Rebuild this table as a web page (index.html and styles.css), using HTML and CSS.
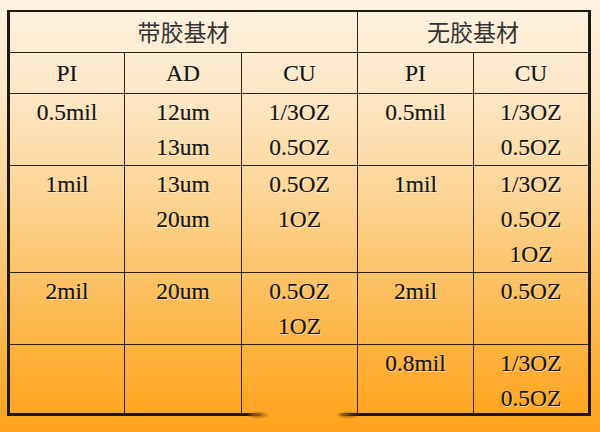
FILE: index.html
```html
<!DOCTYPE html>
<html>
<head>
<meta charset="utf-8">
<link rel="stylesheet" href="styles.css">
</head>
<body>
<div class="page">
  <div class="table">
    <div class="cell group span3">带胶基材</div>
    <div class="cell group span2 last-col">无胶基材</div>

    <div class="cell head">PI</div>
    <div class="cell head">AD</div>
    <div class="cell head">CU</div>
    <div class="cell head">PI</div>
    <div class="cell head last-col">CU</div>

    <div class="cell"><span>0.5mil</span></div>
    <div class="cell"><span>12um</span><span>13um</span></div>
    <div class="cell"><span>1/3OZ</span><span>0.5OZ</span></div>
    <div class="cell"><span>0.5mil</span></div>
    <div class="cell last-col"><span>1/3OZ</span><span>0.5OZ</span></div>

    <div class="cell"><span>1mil</span></div>
    <div class="cell"><span>13um</span><span>20um</span></div>
    <div class="cell"><span>0.5OZ</span><span>1OZ</span></div>
    <div class="cell"><span>1mil</span></div>
    <div class="cell last-col"><span>1/3OZ</span><span>0.5OZ</span><span>1OZ</span></div>

    <div class="cell"><span>2mil</span></div>
    <div class="cell"><span>20um</span></div>
    <div class="cell"><span>0.5OZ</span><span>1OZ</span></div>
    <div class="cell"><span>2mil</span></div>
    <div class="cell last-col"><span>0.5OZ</span></div>

    <div class="cell last-row"></div>
    <div class="cell last-row"></div>
    <div class="cell last-row"></div>
    <div class="cell last-row"><span>0.8mil</span></div>
    <div class="cell last-row last-col"><span>1/3OZ</span><span>0.5OZ</span></div>
  </div>
</div>
</body>
</html>
```

FILE: styles.css
```css
html, body {
  margin: 0;
  padding: 0;
}
body {
  width: 600px;
  height: 432px;
  overflow: hidden;
  background: linear-gradient(to bottom, #fdf2e2 0px, #fde6c3 100px, #fcd493 200px, #fdbd5a 300px, #ffa826 400px, #ffa31c 432px);
}
.page {
  padding: 10px 0 0 7px;
}
.table {
  position: relative;
  width: 584px;
  box-sizing: border-box;
  border-top: 2px solid #1c1812;
  border-left: 3px solid #1c1812;
  border-right: 3px solid #1c1812;
  border-bottom: 0;
  display: grid;
  grid-template-columns: 115px 117px 116px 116px 114px;
  grid-template-rows: 41px 41px 72px 107px 72px 71px;
  color: #161410;
}
.table::after {
  content: "";
  position: absolute;
  left: -3px;
  right: -3px;
  bottom: 0;
  height: 3px;
  background: linear-gradient(to right, #1c1812 0px, #1c1812 240px, rgba(28,24,18,0) 256px, rgba(28,24,18,0) 330px, #1c1812 345px, #1c1812 100%);
}
.table::before {
  content: "";
  position: absolute;
  left: 234px;
  width: 120px;
  bottom: -3px;
  height: 8px;
  background:
    radial-gradient(ellipse 12px 4px at 14px 4px, rgba(110,70,10,0.75), rgba(110,70,10,0) 100%),
    radial-gradient(ellipse 12px 4px at 104px 4px, rgba(110,70,10,0.75), rgba(110,70,10,0) 100%);
  z-index: 1;
}
.cell {
  box-sizing: border-box;
  border-right: 1px solid #2a2216;
  border-bottom: 1px solid #2a2216;
  display: flex;
  flex-direction: column;
  align-items: center;
  padding-top: 1px;
  font-family: "Liberation Serif", "Times New Roman", serif;
  font-size: 23.5px;
  line-height: 35px;
  -webkit-text-stroke: 0.15px #161410;
  text-shadow: 1px 1px 0 rgba(255, 255, 255, 0.5);
}
.cell span {
  display: block;
}
.cell.last-col {
  border-right: 0;
}
.cell.last-row {
  border-bottom: 0;
}
.cell.group {
  justify-content: center;
  padding-top: 0;
  padding-bottom: 3px;
  font-family: "Noto Sans CJK SC", "Noto Sans", sans-serif;
  font-size: 23px;
  color: #333;
  line-height: 30px;
  -webkit-text-stroke: 0;
  text-shadow: none;
}
.span3 {
  grid-column: span 3;
}
.span2 {
  grid-column: span 2;
}
.cell.head {
  justify-content: center;
  padding-top: 0;
}
```
